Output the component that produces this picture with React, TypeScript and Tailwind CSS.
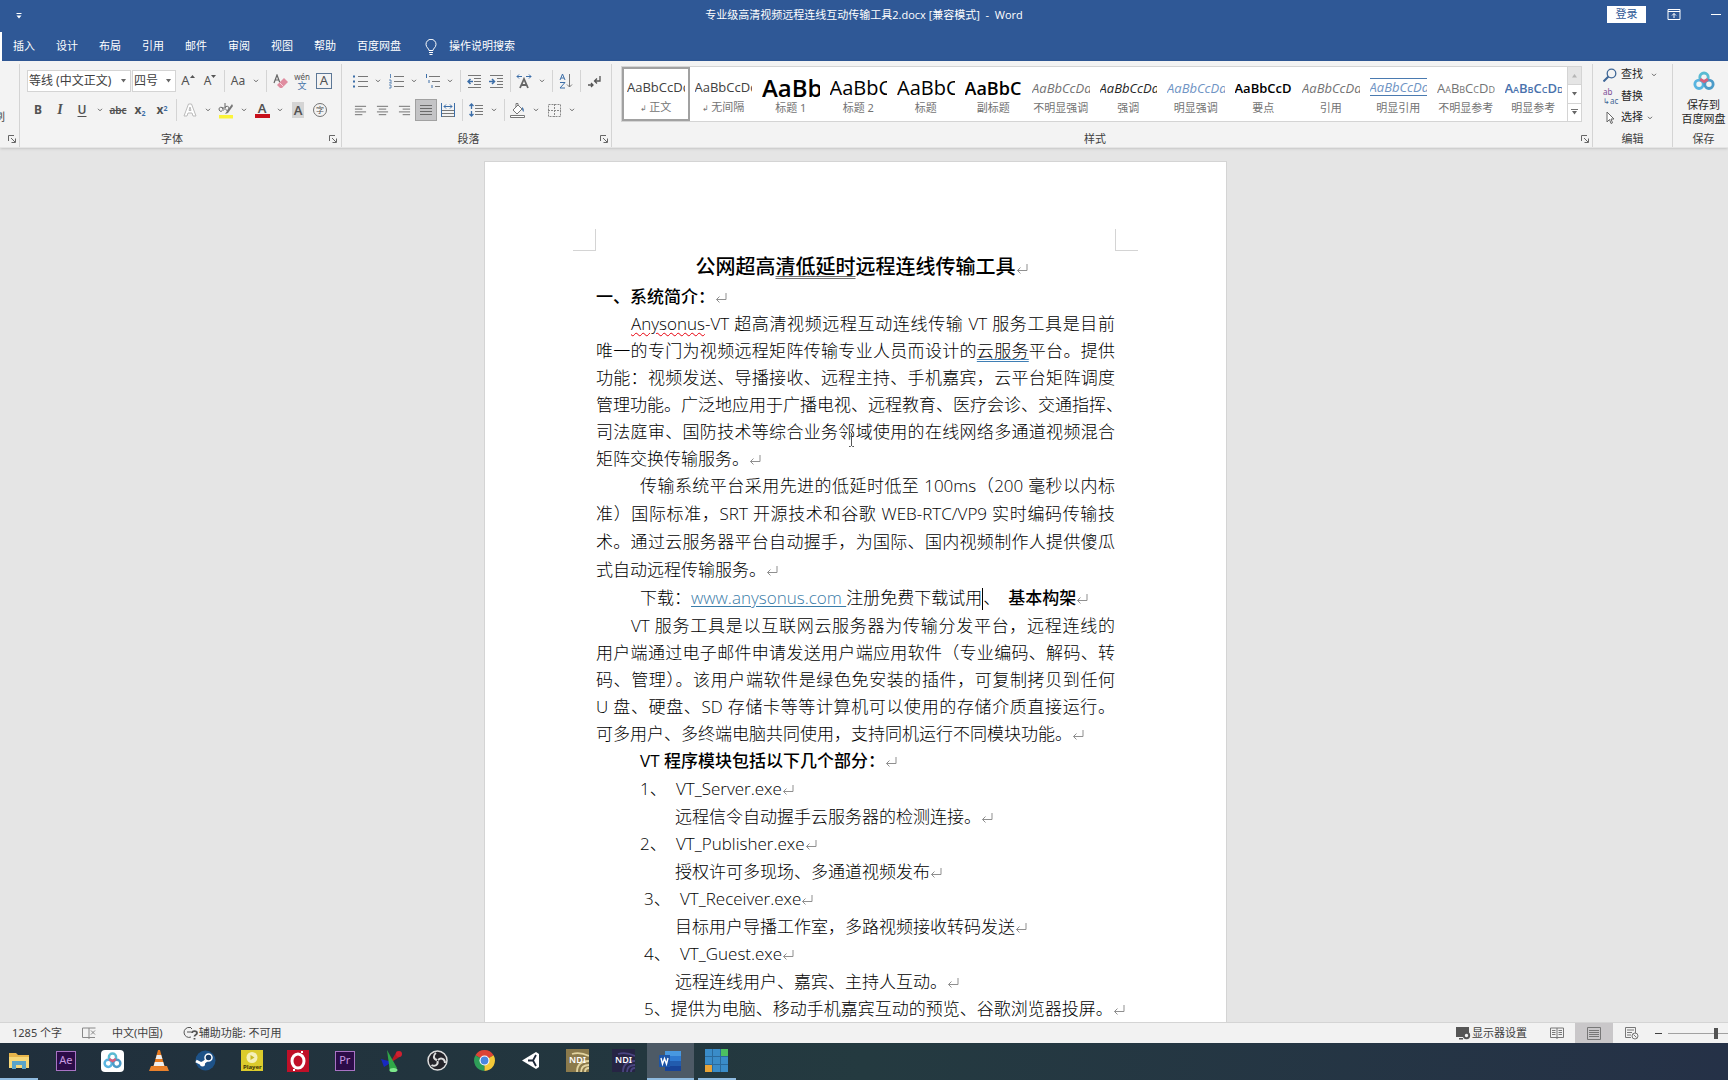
import type { ReactNode } from "react";
import clsx from "clsx";

const tabs = ["插入", "设计", "布局", "引用", "邮件", "审阅", "视图", "帮助", "百度网盘"];

const styles = [
  { name: "正文", mark: true, sample: "AaBbCcDd", look: "text-[13px] text-neutral-700", active: true },
  { name: "无间隔", mark: true, sample: "AaBbCcDd", look: "text-[13px] text-neutral-700" },
  { name: "标题 1", sample: "AaBb", look: "text-2xl font-semibold text-black" },
  { name: "标题 2", sample: "AaBbC", look: "text-xl text-black" },
  { name: "标题", sample: "AaBbC", look: "text-xl text-black" },
  { name: "副标题", sample: "AaBbC", look: "text-lg font-semibold text-black" },
  { name: "不明显强调", sample: "AaBbCcDd", look: "text-[13px] italic text-neutral-500" },
  { name: "强调", sample: "AaBbCcDd", look: "text-[13px] italic text-neutral-800" },
  { name: "明显强调", sample: "AaBbCcDd", look: "text-[13px] italic text-[#6f94c4]" },
  { name: "要点", sample: "AaBbCcD", look: "text-[13px] font-semibold text-black" },
  { name: "引用", sample: "AaBbCcDd", look: "text-[13px] italic text-neutral-500" },
  { name: "明显引用", sample: "AaBbCcDd", look: "text-[13px] italic text-[#6f94c4] border-y border-[#4a7ab0]" },
  { name: "不明显参考", sample: "AaBbCcDd", look: "text-[13px] text-neutral-500 [font-variant-caps:small-caps]" },
  { name: "明显参考", sample: "AaBbCcDd", look: "text-[13px] font-semibold text-[#4a72ad] [font-variant-caps:small-caps]" },
];

function Tool({ label, active, children }: { label: string; active?: boolean; children: ReactNode }) {
  return (
    <button
      aria-label={label}
      className={clsx(
        "flex h-[22px] w-[22px] shrink-0 items-center justify-center text-neutral-600",
        active && "border border-neutral-400 bg-[#c4c4c6]",
      )}
    >
      {children}
    </button>
  );
}

function Caret({ label }: { label: string }) {
  return (
    <button aria-label={label} className="flex h-[22px] w-[14px] shrink-0 items-center justify-center">
      <svg width="6" height="4" viewBox="0 0 6 4" fill="none" stroke="#666">
        <path d="M1 .8 3 2.8 5 .8" />
      </svg>
    </button>
  );
}

function Sep() {
  return (
    <span className="flex h-[22px] w-[6px] shrink-0 justify-center">
      <span className="w-px bg-neutral-300" />
    </span>
  );
}

function Launcher({ label }: { label: string }) {
  return (
    <button aria-label={label}>
      <svg width="8" height="8" viewBox="0 0 8 8" fill="none" stroke="#666">
        <path d="M.5 6V.5H6M3 3l4 4M7.5 3.5v4h-4" />
      </svg>
    </button>
  );
}

function GroupLabel({ children, launcher = true }: { children: string; launcher?: boolean }) {
  return (
    <div className="mt-auto flex h-4 items-center text-[11px] text-neutral-700">
      <span className={clsx("flex-1 text-center", launcher && "pr-3")}>{children}</span>
      {launcher && <Launcher label={`${children}设置`} />}
    </div>
  );
}

function Triangle() {
  return (
    <svg width="5" height="4" viewBox="0 0 5 4" fill="#666" className="mx-auto shrink-0">
      <path d="M0 0h5L2.5 3.5z" />
    </svg>
  );
}

function Combo({ label, value, className }: { label: string; value: string; className: string }) {
  return (
    <label className={clsx("flex h-[22px] items-center border border-neutral-300 bg-white", className)}>
      <select aria-label={label} className="min-w-0 flex-1 appearance-none pl-px text-xs text-neutral-700 outline-none">
        <option>{value}</option>
      </select>
      <span className="w-[14px]"><Triangle /></span>
    </label>
  );
}

function Lines({ d, size = 14 }: { d: string; size?: number }) {
  return (
    <svg width={size} height={size} viewBox="0 0 14 14" fill="none" stroke="#6b6b6b">
      <path d={d} />
    </svg>
  );
}

function FontGroup() {
  return (
    <section className="flex w-[322px] shrink-0 flex-col border-r border-neutral-300 pr-1 pl-[7px]">
      <div className="mt-[6px] flex h-[22px] items-center">
        <Combo label="字体名称" value="等线 (中文正文)" className="w-[104px]" />
        <Combo label="字号" value="四号" className="mx-px w-[44px]" />
        <Tool label="增大字号">
          <span className="text-[13px]">A</span>
          <svg width="5" height="14" viewBox="0 0 5 14" fill="#555"><path d="M0 4 2.5 1 5 4z" /></svg>
        </Tool>
        <Tool label="减小字号">
          <span className="text-xs">A</span>
          <svg width="5" height="14" viewBox="0 0 5 14" fill="#555"><path d="M0 1 2.5 4 5 1z" /></svg>
        </Tool>
        <Sep />
        <Tool label="更改大小写"><span className="text-xs">Aa</span></Tool>
        <Caret label="大小写选项" />
        <Sep />
        <Tool label="清除格式">
          <svg width="15" height="15" viewBox="0 0 15 15" fill="none">
            <path d="M1 9 4 1l3 8M2 6h4" stroke="#666" strokeWidth="1.2" />
            <path d="m4 11 7-7 4 4-6 6-2 0z" fill="#e08c9f" />
            <path d="m6.500 8.500 4 4" stroke="#f6d3da" />
          </svg>
        </Tool>
        <Tool label="拼音指南">
          <span className="flex flex-col items-center text-[8px] leading-[9px]">
            <span>wén</span>
            <span className="text-[9px] leading-[10px] text-[#4472a8]">文</span>
          </span>
        </Tool>
        <Tool label="字符边框">
          <span className="flex h-4 w-4 items-center justify-center border border-[#5c7796] text-[13px]">A</span>
        </Tool>
      </div>
      <div className="mt-[7px] flex h-[22px] items-center">
        <Tool label="加粗"><b className="text-xs">B</b></Tool>
        <Tool label="倾斜"><i className="font-['Liberation_Serif',serif] text-sm font-bold">I</i></Tool>
        <Tool label="下划线"><span className="text-xs font-semibold underline underline-offset-2">U</span></Tool>
        <Caret label="下划线选项" />
        <Tool label="删除线"><span className="text-[10px] font-semibold line-through">abc</span></Tool>
        <Tool label="下标"><span className="text-xs font-bold">x<sub className="text-[7px] text-[#3c6ea8]">2</sub></span></Tool>
        <Tool label="上标"><span className="text-xs font-bold">x<sup className="text-[7px] text-[#3c6ea8]">2</sup></span></Tool>
        <Sep />
        <Tool label="文本效果">
          <svg width="14" height="14" viewBox="0 0 14 14" fill="#fff" stroke="#bbb">
            <path d="M1 13 5.500 1h3L13 13h-3L9 10H5l-1 3zM6 7.500h2L7 4z" />
          </svg>
        </Tool>
        <Caret label="文本效果选项" />
        <Tool label="突出显示">
          <svg width="16" height="17" viewBox="0 0 16 17" fill="none">
            <path d="M1 13h14v3.500H1z" fill="#fbf43a" />
            <path d="M5 5v4M5 7a2 2 0 1 0-1 2M7 1v7M7 6a2 2 0 1 1 1 2" stroke="#666" />
            <path d="m14 2-5 7-2 3 3-1 5-7z" fill="#777" />
          </svg>
        </Tool>
        <Caret label="突出显示颜色" />
        <Tool label="字体颜色">
          <span className="flex flex-col items-center text-[13px] leading-[12px] font-semibold">
            A<span className="h-1 w-[15px] bg-[#c8101c]" />
          </span>
        </Tool>
        <Caret label="字体颜色选项" />
        <Tool label="字符底纹"><span className="bg-neutral-300 px-[2px] text-[13px] leading-4 font-semibold">A</span></Tool>
        <Tool label="带圈字符">
          <span className="flex h-[14px] w-[14px] items-center justify-center rounded-full border border-neutral-500 text-[8px]">字</span>
        </Tool>
      </div>
      <GroupLabel>字体</GroupLabel>
    </section>
  );
}

function ParagraphGroup() {
  return (
    <section className="flex w-[270px] shrink-0 flex-col border-r border-neutral-300 pr-[3px] pl-[7px]">
      <div className="mt-[6px] flex h-[22px] items-center">
        <Tool label="项目符号">
          <svg width="15" height="14" viewBox="0 0 15 14" fill="none" stroke="#777">
            <path d="M5 2.500h10M5 7.500h10M5 12.500h10" />
            <path d="M0 2.500h2M0 7.500h2M0 12.500h2" stroke="#3c6ea8" strokeWidth="2" />
          </svg>
        </Tool>
        <Caret label="项目符号库" />
        <Tool label="编号">
          <svg width="15" height="15" viewBox="0 0 15 15" fill="none" stroke="#777">
            <path d="M5 2.500h10M5 7.500h10M5 12.500h10" />
            <path d="M1.500 0v4M0 6h2v1.500L.5 9H3M0 11h2v3H0" stroke="#3c6ea8" strokeWidth=".8" />
          </svg>
        </Tool>
        <Caret label="编号库" />
        <Tool label="多级列表">
          <svg width="15" height="15" viewBox="0 0 15 15" fill="none" stroke="#777">
            <path d="M4 2.500h11M7 7.500h8M10 12.500h5" />
            <path d="M1.500 0v4M4 6v3M7 11v3" stroke="#3c6ea8" />
          </svg>
        </Tool>
        <Caret label="多级列表库" />
        <Sep />
        <Tool label="减少缩进量">
          <svg width="14" height="13" viewBox="0 0 14 13" fill="none" stroke="#777">
            <path d="M1 .5h13M7 3.500h7M7 6.500h7M7 9.500h7M1 12.500h13" />
            <path d="M6 6.500H1M3.500 4 1 6.500 3.500 9" stroke="#3c6ea8" strokeWidth="1.500" />
          </svg>
        </Tool>
        <Tool label="增加缩进量">
          <svg width="14" height="13" viewBox="0 0 14 13" fill="none" stroke="#777">
            <path d="M1 .5h13M8 3.500h6M8 6.500h6M8 9.500h6M1 12.500h13" />
            <path d="M0 6.500h5M3 4l2.500 2.500L3 9" stroke="#3c6ea8" strokeWidth="1.500" />
          </svg>
        </Tool>
        <Sep />
        <Tool label="中文版式">
          <svg width="16" height="15" viewBox="0 0 16 15" fill="none" stroke="#666">
            <path d="M4 14 8 5l4 9M5.500 11h5" strokeWidth="1.800" />
            <path d="M1 2.500h5M3 .5l-2 2 2 2M10 2.500h5M13 .5l2 2-2 2" stroke="#3c6ea8" />
          </svg>
        </Tool>
        <Caret label="中文版式选项" />
        <Sep />
        <Tool label="排序">
          <svg width="14" height="16" viewBox="0 0 14 16" fill="none" stroke="#3c6ea8">
            <path d="M1 7 3.500 1 6 7M2 5h3M1 9.500h5L1 15h5" />
            <path d="M10.500 1v13M8 11.500l2.500 2.500L13 11.500" stroke="#777" />
          </svg>
        </Tool>
        <Sep />
        <Tool label="显示编辑标记">
          <svg width="13" height="13" viewBox="0 0 13 13" fill="none" stroke="#555">
            <path d="M12 1v5H7M9 3.500 6.500 6 9 8.500M0 10h5M3 8l2 2-2 2" strokeWidth="1.300" />
          </svg>
        </Tool>
      </div>
      <div className="mt-[7px] flex h-[22px] items-center">
        <Tool label="左对齐"><Lines size={13} d="M1 2.500h12M1 5.500h8M1 8.500h12M1 11.500h8" /></Tool>
        <Tool label="居中"><Lines size={13} d="M1 2.500h12M3 5.500h8M1 8.500h12M3 11.500h8" /></Tool>
        <Tool label="右对齐"><Lines size={13} d="M1 2.500h12M5 5.500h8M1 8.500h12M5 11.500h8" /></Tool>
        <Tool label="两端对齐" active><Lines d="M1 2.500h12M1 5.500h12M1 8.500h12M1 11.500h12" /></Tool>
        <Tool label="分散对齐">
          <svg width="14" height="14" viewBox="0 0 14 14" fill="none" stroke="#777">
            <path d="M1 7.500h12M1 10.500h12M1 13.500h12" />
            <path d="M.5 0v14M13.500 0v14M3 3.500h8M5 1.500l-2 2 2 2M9 1.500l2 2-2 2" stroke="#3c6ea8" />
          </svg>
        </Tool>
        <Sep />
        <Tool label="行距">
          <svg width="14" height="14" viewBox="0 0 14 14" fill="none" stroke="#777">
            <path d="M6 2.500h8M6 5.500h8M6 8.500h8M6 11.500h8" />
            <path d="M2.500 1v5M.5 3l2-2 2 2M2.500 8v5M.5 11l2 2 2-2" stroke="#3c6ea8" strokeWidth="1.300" />
          </svg>
        </Tool>
        <Caret label="行距选项" />
        <Sep />
        <Tool label="底纹">
          <svg width="16" height="16" viewBox="0 0 16 16" fill="none" stroke="#777">
            <path d="M3 8 8 3l4 4-5 5zM6 5V1.500h2V3" fill="#fff" />
            <path d="M12 5c2 1 2 3 1.500 5-1-1-1.500-2-1.500-5z" fill="#3c6ea8" stroke="none" />
            <path d="M.5 13.500h14v2H.5z" fill="#fff" />
          </svg>
        </Tool>
        <Caret label="底纹颜色" />
        <Tool label="边框">
          <svg width="13" height="13" viewBox="0 0 13 13" fill="none" stroke="#888" strokeDasharray="2 1">
            <path d="M.5.5h12v12H.5zM6.500 0v13M0 6.500h13" />
          </svg>
        </Tool>
        <Caret label="边框选项" />
      </div>
      <GroupLabel>段落</GroupLabel>
    </section>
  );
}

function StylesGroup() {
  return (
    <section className="flex min-w-0 flex-1 flex-col border-r border-neutral-300 pr-[3px] pl-[9px]">
      <div className="mt-[2px] mr-[7px] flex h-14 border border-neutral-300 bg-white">
        <div className="flex min-w-0 flex-1">
          {styles.map((s) => (
            <button
              key={s.name}
              className={clsx(
                "flex min-w-0 flex-1 flex-col items-center justify-end border-2 px-[3px] pb-[3px]",
                s.active ? "border-neutral-400" : "border-transparent",
              )}
            >
              <span
                className={clsx(
                  "mb-1 w-full overflow-x-clip text-left font-['Open_Sans',sans-serif] leading-4 whitespace-nowrap",
                  s.look,
                )}
              >
                {s.sample}
              </span>
              <span className="text-[11px] leading-4 whitespace-nowrap text-neutral-500">
                {s.mark && <span className="text-[8px]">↲ </span>}
                {s.name}
              </span>
            </button>
          ))}
        </div>
        <div className="flex w-[14px] flex-col divide-y divide-neutral-300 border-l border-neutral-300">
          <button aria-label="上一行" className="flex flex-1 items-center justify-center bg-neutral-200">
            <svg width="5" height="4" viewBox="0 0 5 4" fill="#b5b5b5"><path d="M0 3.500h5L2.500 0z" /></svg>
          </button>
          <button aria-label="下一行" className="flex flex-1 items-center"><Triangle /></button>
          <button aria-label="其他样式" className="flex flex-1 flex-col items-center justify-center gap-px">
            <span className="h-px w-[7px] bg-neutral-500" />
            <Triangle />
          </button>
        </div>
      </div>
      <GroupLabel>样式</GroupLabel>
    </section>
  );
}

function EditGroup() {
  return (
    <section className="flex w-20 shrink-0 flex-col border-r border-neutral-300 text-[11px] text-neutral-800">
      <div className="flex flex-col pl-[10px]">
        <div className="flex h-[21px] items-center">
          <button className="flex items-center gap-1">
            <svg width="14" height="14" viewBox="0 0 14 14" fill="none" stroke="#3f6796" strokeWidth="1.300">
              <circle cx="8.500" cy="5.500" r="4.300" /><path d="m5.500 8.500-5 5" strokeWidth="2" />
            </svg>
            查找
          </button>
          <span className="ml-1"><Caret label="查找选项" /></span>
        </div>
        <button className="flex h-[22px] items-center gap-1">
          <span className="flex w-[14px] flex-col text-left text-[8px] leading-[9px]">
            <span className="text-[#7d4d96]">ab</span>
            <span className="text-[#3f6796]">↳ac</span>
          </span>
          替换
        </button>
        <div className="flex h-[21px] items-center">
          <button className="flex items-center gap-1">
            <svg width="14" height="14" viewBox="0 0 14 14" fill="#fff" stroke="#666">
              <path d="M4 1v10l2.500-2.500L8 12.500l1.500-.7L8 8h3z" />
            </svg>
            选择
          </button>
          <Caret label="选择选项" />
        </div>
      </div>
      <GroupLabel launcher={false}>编辑</GroupLabel>
    </section>
  );
}

function Cloud({ size }: { size: number }) {
  return (
    <svg width={size} height={size} viewBox="0 0 20 20" fill="none" strokeWidth="2.600">
      <circle cx="10" cy="6.500" r="3.800" stroke="#5abbd2" />
      <circle cx="5.500" cy="13" r="3.800" stroke="#58b4e0" />
      <circle cx="14.500" cy="13" r="3.800" stroke="#4c9bc8" />
      <path d="M6.500 8.500 10 10.500l3.500-2" stroke="#d8607c" />
    </svg>
  );
}

function Ribbon() {
  return (
    <div className="flex h-[87px] shrink-0 border-b border-neutral-200 bg-[#f3f3f3] pt-[3px] shadow-sm">
      <section className="flex w-5 shrink-0 flex-col justify-end overflow-hidden border-r border-neutral-300 text-[11px] text-neutral-700">
        <span className="-ml-[6px] h-[22px] w-3">刷</span>
        <div className="flex h-4 items-center justify-center pl-1"><Launcher label="剪贴板设置" /></div>
      </section>
      <FontGroup />
      <ParagraphGroup />
      <StylesGroup />
      <EditGroup />
      <section className="flex w-[55px] shrink-0 flex-col pl-[6px] text-[11px] text-neutral-800">
        <button className="flex flex-col items-center pt-[6px] leading-[14px] whitespace-nowrap">
          <Cloud size={22} />
          <span className="mt-[6px]">保存到</span>
          <span>百度网盘</span>
        </button>
        <GroupLabel launcher={false}>保存</GroupLabel>
      </section>
    </div>
  );
}

function Header() {
  return (
    <header className="shrink-0 bg-[#2f5896] text-[11px] text-white">
      <div className="flex h-8 items-center">
        <div className="flex-1">
          <button aria-label="自定义快速访问工具栏" className="ml-4 block">
            <svg width="6" height="6" viewBox="0 0 6 6" fill="#fff"><path d="M.5 0h5v1h-5zM.5 2.500h5L3 5.500z" /></svg>
          </button>
        </div>
        <h1 className="pb-[2px] font-['Open_Sans','Noto_Sans_CJK_SC',sans-serif] whitespace-pre">
          专业级高清视频远程连线互动传输工具2.docx [兼容模式]  -  Word
        </h1>
        <div className="flex flex-1 items-center justify-end pb-[3px]">
          <button className="h-[17px] w-[39px] bg-white text-[#2f5896]">登录</button>
          <button aria-label="功能区显示选项" className="ml-[21px]">
            <svg width="14" height="12" viewBox="0 0 14 12" fill="none" stroke="#fff">
              <path d="M1 .5h12v10H1zM1 2.500h12M7 9V4.500M5 6.500l2-2 2 2" />
            </svg>
          </button>
          <button aria-label="最小化" className="mr-[7px] ml-[30px] h-3 w-[10px]"><span className="block h-px bg-white" /></button>
        </div>
      </div>
      <nav className="flex h-[29px] items-center border-l-2 border-white pl-[11px]">
        <div className="flex gap-[21px]">
          {tabs.map((tab) => (
            <button key={tab}>{tab}</button>
          ))}
        </div>
        <button className="ml-6 flex items-center gap-3">
          <svg width="12" height="16" viewBox="0 0 12 16" fill="none" stroke="#fff">
            <path d="M4 11.500C4 9.500 1 8.500 1 5.300a5 5 0 0 1 10 0c0 3.200-3 4.200-3 6.200zM4 13.500h4M4.500 15.500h3" />
          </svg>
          操作说明搜索
        </button>
      </nav>
    </header>
  );
}

function Return() {
  return (
    <svg width="12" height="10" viewBox="0 0 12 10" fill="none" stroke="#8f8f8f" className="inline-block align-baseline">
      <path d="M11 0v6.500H1.500M4.500 3.500l-3 3 3 3" />
    </svg>
  );
}

// A line that fills the measure; the last line of a paragraph is left ragged.
function Full({ children, className }: { children: ReactNode; className?: string }) {
  return <span className={clsx("block whitespace-nowrap [text-align-last:justify]", className)}>{children}</span>;
}

function Page() {
  return (
    <article className="h-[1050px] w-[743px] shrink-0 border border-neutral-300 bg-white pt-[67px] font-['Open_Sans','Noto_Sans_CJK_SC',sans-serif] text-[17px] font-light text-black">
      <div className="flex h-[22px] justify-between px-[88px]">
        <span className="w-[23px] border-r border-b border-neutral-300" />
        <span className="w-[23px] border-b border-l border-neutral-300" />
      </div>
      <div className="mx-[111px]">
        <h2 className="pl-3 text-center text-xl leading-8 font-medium">
          公网超高<span className="underline decoration-neutral-500 decoration-double decoration-1 underline-offset-2">清低延时</span>远程连线传输工具<Return />
        </h2>
        <h3 className="leading-[27px] font-medium">一、系统简介：<Return /></h3>
        <p className="leading-[27px]">
          <Full className="pl-[35px]">
            <span className="underline decoration-red-600 decoration-wavy decoration-1 underline-offset-2">Anysonus</span>-VT 超高清视频远程互动连线传输 VT 服务工具是目前
          </Full>
          <Full>
            唯一的专门为视频远程矩阵传输专业人员而设计的<span className="underline decoration-[#3f7fb5] decoration-double decoration-1 underline-offset-2">云服务</span>平台。提供
          </Full>
          <Full>功能：视频发送、导播接收、远程主持、手机嘉宾，云平台矩阵调度</Full>
          <Full>管理功能。广泛地应用于广播电视、远程教育、医疗会诊、交通指挥、</Full>
          <Full>
            司法庭审、国防技术等综合业务邻
            <span className="relative">
              <svg width="7" height="15" viewBox="0 0 7 15" fill="none" stroke="#555" className="absolute top-3 -left-2">
                <path d="M1 .5h1.500l1 1 1-1H6M3.500 1v13M1 14.500h1.500l1-1 1 1H6" />
              </svg>
            </span>
            域使用的在线网络多通道视频混合
          </Full>
          矩阵交换传输服务。<Return />
        </p>
        <p className="leading-7">
          <Full className="pl-11">传输系统平台采用先进的低延时低至 100ms（200 毫秒以内标</Full>
          <Full>准）国际标准，SRT 开源技术和谷歌 WEB-RTC/VP9 实时编码传输技</Full>
          <Full>术。通过云服务器平台自动握手，为国际、国内视频制作人提供傻瓜</Full>
          式自动远程传输服务。<Return />
        </p>
        <p className="pl-11 leading-7">
          下载：<a href="#download" className="text-[#3a7ca8] underline underline-offset-2">www.anysonus.com </a>注册免费下载试用
          <span className="inline-block h-[22px] w-px bg-black align-middle" />、
          <span className="ml-2 font-medium">基本构架</span><Return />
        </p>
        <p className="leading-[27px]">
          <Full className="pl-[35px]">VT 服务工具是以互联网云服务器为传输分发平台，远程连线的</Full>
          <Full>用户端通过电子邮件申请发送用户端应用软件（专业编码、解码、转</Full>
          <Full>码、管理）。该用户端软件是绿色免安装的插件，可复制拷贝到任何</Full>
          <Full>U 盘、硬盘、SD 存储卡等等计算机可以使用的存储介质直接运行。</Full>
          可多用户、多终端电脑共同使用，支持同机运行不同模块功能。<Return />
        </p>
        <h3 className="pl-11 leading-7 font-medium">VT 程序模块包括以下几个部分：<Return /></h3>
        <Module number="1" name="VT_Server.exe">远程信令自动握手云服务器的检测连接。</Module>
        <Module number="2" name="VT_Publisher.exe">授权许可多现场、多通道视频发布</Module>
        <Module number="3" name="VT_Receiver.exe" inset>目标用户导播工作室，多路视频接收转码发送</Module>
        <Module number="4" name="VT_Guest.exe" inset>远程连线用户、嘉宾、主持人互动。</Module>
        <p className="pl-12 leading-[27px] whitespace-nowrap">5、提供为电脑、移动手机嘉宾互动的预览、谷歌浏览器投屏。<Return /></p>
      </div>
    </article>
  );
}

function Module({ number, name, inset, children }: { number: string; name: string; inset?: boolean; children: string }) {
  return (
    <>
      <p className={clsx("flex leading-7", inset ? "pl-12" : "pl-11")}>
        <span className="w-9">{number}、</span>
        <span>{name}<Return /></span>
      </p>
      <p className="pl-[79px] leading-[27px]">{children}<Return /></p>
    </>
  );
}

function StatusBar() {
  return (
    <footer className="flex h-[21px] shrink-0 items-center border-t border-neutral-300 bg-[#f2f2f2] pl-3 text-[11px] text-neutral-700">
      <span>1285 个字</span>
      <svg width="14" height="12" viewBox="0 0 14 12" fill="none" stroke="#888" className="ml-5">
        <path d="M7 1v11M7 1H.5v9.500H7M7 1h6.500M7 10.500h6M9 3.500l4 4M13 3.500l-4 4" />
      </svg>
      <span className="ml-4">中文(中国)</span>
      <button className="ml-5 flex items-center">
        <svg width="16" height="14" viewBox="0 0 16 14" fill="none" stroke="#555">
          <path d="M7 1.500A5 5 0 1 0 8 11M7 1l2 2M4 6h4" />
          <path d="M9 7c0-2.500 5-2.500 5 0 0 2-2.500 1.500-2.500 3.500M11.500 12v1.500" strokeWidth="1.800" />
        </svg>
        辅助功能: 不可用
      </button>
      <button className="ml-auto flex items-center gap-px">
        <svg width="15" height="14" viewBox="0 0 15 14" fill="#555">
          <path d="M0 1h13v6H9v4H0zM3 12h4v1.500H3z" />
          <circle cx="10.500" cy="9.500" r="2.700" fill="#f2f2f2" stroke="#555" strokeWidth="2" />
        </svg>
        显示器设置
      </button>
      <button aria-label="阅读视图" className="ml-[23px]">
        <svg width="14" height="12" viewBox="0 0 14 12" fill="none" stroke="#777">
          <path d="M.5 1h13v9.500H.5zM7 1v11M2 3.500h3.500M2 5.500h3.500M2 7.500h3.500M8.500 3.500H12M8.500 5.500H12M8.500 7.500H12" />
        </svg>
      </button>
      <button aria-label="页面视图" className="ml-[11px] flex h-5 w-[38px] items-center justify-center bg-[#c9c7c9]">
        <svg width="14" height="13" viewBox="0 0 14 13" fill="none" stroke="#777">
          <path d="M.5.5h13v12H.5zM2 3.500h10M2 5.500h10M2 7.500h10M2 9.500h10" />
        </svg>
      </button>
      <button aria-label="Web 版式视图" className="ml-3">
        <svg width="14" height="13" viewBox="0 0 14 13" fill="none" stroke="#777">
          <path d="M6 10.500H.5V.5h10V6M2 3h7M2 5.500h5M2 8h4" />
          <circle cx="10" cy="9" r="3" /><path d="m8.500 7.500 3 3" />
        </svg>
      </button>
      <button aria-label="缩小" className="ml-4 h-px w-[7px] bg-neutral-700" />
      <input
        type="range"
        aria-label="显示比例"
        min="0"
        max="100"
        defaultValue="82"
        className="ml-[6px] h-3 w-[60px] appearance-none bg-transparent [&::-webkit-slider-runnable-track]:h-px [&::-webkit-slider-runnable-track]:bg-neutral-400 [&::-webkit-slider-thumb]:-mt-[5px] [&::-webkit-slider-thumb]:h-[11px] [&::-webkit-slider-thumb]:w-1 [&::-webkit-slider-thumb]:appearance-none [&::-webkit-slider-thumb]:bg-neutral-600"
      />
    </footer>
  );
}

function Adobe({ children }: { children: string }) {
  return (
    <span className="flex h-5 w-5 items-center justify-center border border-[#a873c4] bg-[#2c0c48] text-[11px] text-[#c79ae0]">
      {children}
    </span>
  );
}

function Ndi({ gold }: { gold?: boolean }) {
  return (
    <svg width="23" height="23" viewBox="0 0 23 23" fill="none">
      <path d="M0 0h23v23H0z" fill={gold ? "#8b7a4c" : "#262444"} />
      <path
        d="M11 23c0-7 4-11 12-11M15 23c0-5 3-7 8-7M19 23c0-3 1-4 4-4M6 5c6-2 11-1 17 2"
        stroke={gold ? "#e2d4a0" : "#4a4580"}
        strokeWidth="1.800"
      />
      <text x="3" y="14" fontSize="9" fontWeight="600" fill="#fff">NDI</text>
    </svg>
  );
}

const apps: { name: string; icon: ReactNode; open?: boolean; active?: boolean }[] = [
  {
    name: "文件资源管理器",
    open: true,
    icon: (
      <svg width="22" height="20" viewBox="0 0 22 20">
        <path d="M1 2h7l2 2h11v13H1z" fill="#e8b64c" />
        <path d="M1 6h20v11H1z" fill="#f8d878" />
        <path d="M4 10h14v8h-4v-4H8v4H4z" fill="#5ba4c8" />
      </svg>
    ),
  },
  { name: "After Effects", icon: <Adobe>Ae</Adobe> },
  { name: "百度网盘", icon: <span className="flex h-[22px] w-[23px] items-center justify-center rounded bg-white"><Cloud size={19} /></span> },
  {
    name: "VLC",
    icon: (
      <svg width="20" height="22" viewBox="0 0 20 22">
        <path d="m9 0h2l5 18H4z" fill="#e87b20" />
        <path d="m7.800 5-1.200 4h6.800l-1.200-4zM5.800 12l-1.200 4h10.800l-1.200-4z" fill="#eee" />
        <path d="M2 16h3c1 2 9 2 10 0h3l2 5H0z" fill="#e8812c" />
      </svg>
    ),
  },
  {
    name: "Steam",
    icon: (
      <svg width="21" height="21" viewBox="0 0 21 21">
        <circle cx="10.500" cy="10.500" r="10" fill="#1d5288" />
        <path d="m1 11 6 3 6-5" stroke="#fff" strokeWidth="3" fill="none" />
        <circle cx="13.500" cy="7.500" r="3.500" fill="#173a63" stroke="#fff" strokeWidth="1.500" />
        <circle cx="7.500" cy="14" r="2.500" fill="#fff" />
      </svg>
    ),
  },
  {
    name: "Player",
    icon: (
      <svg width="22" height="21" viewBox="0 0 22 21">
        <path d="M0 0h22v21H0z" fill="#dccb2c" />
        <circle cx="11" cy="7.500" r="5.500" fill="#f5f0b8" />
        <path d="M9.500 5v5l4-2.500z" fill="#c8b820" />
        <text x="2" y="19" fontSize="6" fontWeight="700" fill="#3d3508">Player</text>
      </svg>
    ),
  },
  {
    name: "播放服务",
    icon: (
      <svg width="22" height="22" viewBox="0 0 22 22" fill="none">
        <path d="M0 0h22v22H0z" fill="#c01028" />
        <ellipse cx="11" cy="11" rx="6" ry="7" stroke="#fff" strokeWidth="3" />
        <path d="M7 19v2M15 3V1" stroke="#fff" strokeWidth="2" />
      </svg>
    ),
  },
  { name: "Premiere Pro", icon: <Adobe>Pr</Adobe> },
  {
    name: "调色工具",
    icon: (
      <svg width="22" height="22" viewBox="0 0 22 22">
        <path d="m10 13 7-12 4 5z" fill="#b81824" />
        <path d="m12 12-11-3 3 8z" fill="#1828c0" />
        <path d="m7 0 10 18-7 4z" fill="#30a848" />
        <ellipse cx="13.500" cy="20" rx="4" ry="2" fill="#7de88c" />
        <circle cx="19" cy="4" r="3" fill="#d02030" />
      </svg>
    ),
  },
  {
    name: "OBS",
    icon: (
      <svg width="21" height="21" viewBox="0 0 21 21" fill="none" stroke="#ddd">
        <circle cx="10.500" cy="10.500" r="9.500" fill="#24242a" strokeWidth="1.500" />
        <path d="M10 10C6 9 6 5 9 3M11 10c3-3 7-1 7 3M10.500 11c1 4-3 6-6 4" strokeWidth="2" />
      </svg>
    ),
  },
  {
    name: "Chrome",
    icon: (
      <svg width="21" height="21" viewBox="0 0 21 21">
        <path d="M10.500 10.500 1.400 5.300A10.500 10.500 0 0 1 19.600 5.300z" fill="#dc4437" />
        <path d="M10.500 10.500 1.400 5.300A10.500 10.500 0 0 0 10.500 21z" fill="#2e9e58" />
        <path d="M10.500 10.500 10.500 21A10.500 10.500 0 0 0 19.600 5.300z" fill="#f4c838" />
        <circle cx="10.500" cy="10.500" r="5" fill="#fff" /><circle cx="10.500" cy="10.500" r="3.900" fill="#4a86e0" />
      </svg>
    ),
  },
  {
    name: "Unity",
    icon: (
      <svg width="18" height="19" viewBox="0 0 18 19">
        <path d="M0 9.500 14 1l3 2v13l-3 2z" fill="#fff" />
        <path d="M6 9.500h5M11 9.500 14 4M11 9.500l3 5.500" stroke="#1c2838" strokeWidth="1.800" />
      </svg>
    ),
  },
  { name: "NDI Tools", icon: <Ndi gold /> },
  { name: "NDI Launcher", icon: <Ndi /> },
  {
    name: "Word",
    open: true,
    active: true,
    icon: (
      <svg width="22" height="20" viewBox="0 0 22 20">
        <path d="M6 0h16v5H6z" fill="#4898e0" /><path d="M6 5h16v5H6z" fill="#2f7ad0" />
        <path d="M6 10h16v5H6z" fill="#225cae" /><path d="M6 15h16v5H6z" fill="#184498" />
        <path d="M0 4h11v12H0z" fill="#1d55a8" />
        <path d="m2 7 1.500 6 2-5.500 2 5.500L9 7" fill="none" stroke="#fff" strokeWidth="1.400" />
      </svg>
    ),
  },
  {
    name: "网格工具",
    open: true,
    icon: (
      <svg width="23" height="23" viewBox="0 0 23 23">
        <path d="M0 0h23v23H0z" fill="#2a6a9c" />
        <path
          d="M0 0h7v7H0zM8 0h7v7H8zM0 8h7v7H0zM8 8h7v7H8zM16 8h7v7h-7zM8 16h7v7H8zM16 16h7v7h-7z"
          fill="#3a8cc8"
        />
        <path d="M16 0h7v7h-7z" fill="#4cc060" /><path d="M0 16h7v7H0z" fill="#e8a438" />
      </svg>
    ),
  },
];

function Taskbar() {
  return (
    <nav className="h-[37px] shrink-0 overflow-hidden bg-linear-to-r from-[#202f3c] via-[#243a40] to-[#253147]">
      <div className="-ml-1 flex h-full w-[744px]">
        {apps.map((app) => (
          <button
            key={app.name}
            aria-label={app.name}
            className={clsx("flex flex-1 flex-col items-center", app.active && "bg-[#4d5a66]")}
          >
            <span className="flex flex-1 items-center">{app.icon}</span>
            <span className={clsx("h-[2px]", app.active ? "w-full" : "w-[38px]", app.open && "bg-[#8fbbe0]")} />
          </button>
        ))}
      </div>
    </nav>
  );
}

export default function App() {
  return (
    <div className="flex h-screen flex-col overflow-hidden bg-[#e5e5e5] font-['Noto_Sans','Noto_Sans_CJK_SC',sans-serif]">
      <Header />
      <Ribbon />
      <main className="flex min-h-0 flex-1 justify-center overflow-hidden pt-[13px] pr-[17px]">
        <Page />
      </main>
      <StatusBar />
      <Taskbar />
    </div>
  );
}
